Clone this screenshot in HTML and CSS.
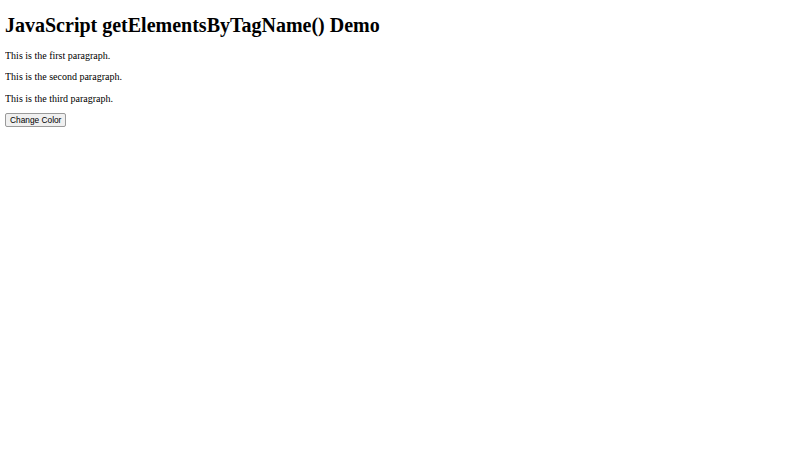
FILE: index.html
```html
<!DOCTYPE html>
<html>
<head>
<meta charset="utf-8">
<title>JavaScript getElementsByTagName() Demo</title>
<link rel="stylesheet" href="styles.css">
</head>
<body class="page">
<h1 class="title">JavaScript getElementsByTagName() Demo</h1>
<p class="para">This is the first paragraph.</p>
<p class="para">This is the second paragraph.</p>
<p class="para para-last">This is the third paragraph.</p>
<button class="btn">Change Color</button>
</body>
</html>
```
FILE: styles.css
```css
html, body {
  background: #fff;
}
.page {
  margin: 5px;
  font-family: "Liberation Sans", Arial, sans-serif;
  font-family: "Liberation Serif", "Times New Roman", serif;
  color: #000;
}
.title {
  font-size: 20px;
  font-weight: bold;
  margin: 8.5px 0 13.4px;
  line-height: 23px;
}
.para {
  font-size: 10px;
  line-height: 11.5px;
  margin: 10px 0;
}
.para-last {
  margin-bottom: 5px;
}
.btn {
  font-family: "Liberation Sans", Arial, sans-serif;
  font-size: 8.33px;
  padding: 1px 4px;
  margin: 0;
  border: 1px solid #9a9a9a;
  border-radius: 2px;
  background: #f0f0f0;
  color: #000;
}
```
